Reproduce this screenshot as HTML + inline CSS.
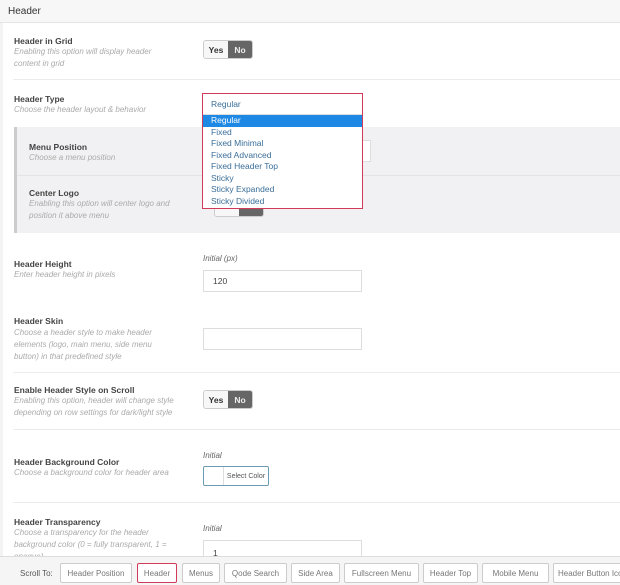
<!DOCTYPE html><html><head><style>
*{margin:0;padding:0;box-sizing:border-box}
body{width:620px;height:585px;overflow:hidden;background:#fff;font-family:"Liberation Sans",sans-serif;position:relative;color:#333}
.a{position:absolute;white-space:nowrap}
.t{font-size:8.5px;font-weight:bold;color:#444}
.d{font-size:8px;font-style:italic;color:#aaa;line-height:12px}
.sep{position:absolute;left:13px;right:0;height:1px;background:#ececec}
.tg{position:absolute;width:50px;height:19px;border:1px solid #ccc;border-radius:3px;overflow:hidden;font-size:8.5px;font-weight:bold;display:flex}
.tg span{flex:1;display:flex;align-items:center;justify-content:center}
.tg .y{background:#f7f7f7;color:#333}.tg .n{background:#666;color:#eee}
.in{position:absolute;border:1px solid #ddd;background:#fff;font-size:8.5px;padding-left:9px;display:flex;align-items:center;color:#444}
.ini{font-size:8px;font-style:italic;color:#666}
.btn{position:absolute;top:563px;height:20px;border:1px solid #ccc;border-radius:2px;background:#fff;font-size:8px;color:#777;display:flex;align-items:center;justify-content:center}
.opt{height:11.5px;line-height:11.5px;padding-left:8px;font-size:8.5px;color:#3a6e99}
</style></head><body>
<div class="a" style="left:0;top:0;width:620px;height:23px;background:#f7f7f7;border-bottom:1px solid #e5e5e5"></div>
<div class="a" style="left:8px;top:6px;font-size:10px;color:#333">Header</div>
<div class="a" style="left:0;top:23px;width:3px;height:534px;background:#f3f3f3"></div>

<div class="a t" style="left:14px;top:36px">Header in Grid</div>
<div class="a d" style="left:14px;top:46px">Enabling this option will display header<br>content in grid</div>
<div class="tg" style="left:203px;top:40px"><span class="y">Yes</span><span class="n">No</span></div>
<div class="sep" style="top:79px"></div>

<div class="a t" style="left:14px;top:94px">Header Type</div>
<div class="a d" style="left:14px;top:104px">Choose the header layout &amp; behavior</div>

<div class="a" style="left:14px;top:127px;width:606px;height:106px;background:#f1f1f3;border-left:3px solid #ccc"></div>
<div class="sep" style="top:175px;left:17px;background:#e4e4e4"></div>
<div class="a t" style="left:29px;top:142px">Menu Position</div>
<div class="a d" style="left:29px;top:152px">Choose a menu position</div>
<div class="in" style="left:330px;top:140px;width:41px;height:22px"></div>
<div class="a t" style="left:29px;top:188px">Center Logo</div>
<div class="a d" style="left:29px;top:198px">Enabling this option will center logo and<br>position it above menu</div>
<div class="tg" style="left:214px;top:198px"><span class="y"></span><span class="n"></span></div>

<div class="a" style="left:202px;top:93px;width:161px;height:116px;border:1.5px solid #d23a5a;background:#fff">
<div style="height:21px;line-height:20px;padding-left:8px;font-size:8.5px;color:#3a6e99;border-bottom:1px solid #ddd">Regular</div>
<div class="opt" style="background:#1e88e5;color:#fff">Regular</div>
<div class="opt">Fixed</div><div class="opt">Fixed Minimal</div><div class="opt">Fixed Advanced</div><div class="opt">Fixed Header Top</div><div class="opt">Sticky</div><div class="opt">Sticky Expanded</div><div class="opt">Sticky Divided</div>
</div>

<div class="a ini" style="left:203px;top:254px">Initial (px)</div>
<div class="a t" style="left:14px;top:259px">Header Height</div>
<div class="a d" style="left:14px;top:269px">Enter header height in pixels</div>
<div class="in" style="left:203px;top:270px;width:159px;height:22px">120</div>

<div class="a t" style="left:14px;top:316px">Header Skin</div>
<div class="a d" style="left:14px;top:327px">Choose a header style to make header<br>elements (logo, main menu, side menu<br>button) in that predefined style</div>
<div class="in" style="left:203px;top:328px;width:159px;height:22px"></div>
<div class="sep" style="top:372px"></div>

<div class="a t" style="left:14px;top:385px">Enable Header Style on Scroll</div>
<div class="a d" style="left:14px;top:395px">Enabling this option, header will change style<br>depending on row settings for dark/light style</div>
<div class="tg" style="left:203px;top:390px"><span class="y">Yes</span><span class="n">No</span></div>
<div class="sep" style="top:429px"></div>

<div class="a ini" style="left:203px;top:451px">Initial</div>
<div class="a t" style="left:14px;top:457px">Header Background Color</div>
<div class="a d" style="left:14px;top:467px">Choose a background color for header area</div>
<div class="a" style="left:203px;top:466px;width:66px;height:20px;border:1px solid #6b9cb5;border-radius:2px;background:#fff;display:flex"><div style="width:20px;border-right:1px solid #ddd"></div><div style="flex:1;font-size:7px;color:#555;display:flex;align-items:center;justify-content:center">Select Color</div></div>
<div class="sep" style="top:502px"></div>

<div class="a t" style="left:14px;top:517px">Header Transparency</div>
<div class="a d" style="left:14px;top:527px">Choose a transparency for the header<br>background color (0 = fully transparent, 1 =<br>opaque)</div>
<div class="a ini" style="left:203px;top:524px">Initial</div>
<div class="in" style="left:203px;top:540px;width:159px;height:22px;align-items:flex-start;padding-top:7px">1</div>

<div class="a" style="left:0;top:556px;width:620px;height:29px;background:#f5f5f5;border-top:1px solid #ddd"></div>
<div class="a" style="left:20px;top:569px;font-size:8px;color:#555">Scroll To:</div>
<div class="btn" style="left:60px;width:72px">Header Position</div>
<div class="btn" style="left:137px;width:40px;border:1.5px solid #d23a5a">Header</div>
<div class="btn" style="left:182px;width:38px">Menus</div>
<div class="btn" style="left:224px;width:63px">Qode Search</div>
<div class="btn" style="left:291px;width:49px">Side Area</div>
<div class="btn" style="left:344px;width:75px">Fullscreen Menu</div>
<div class="btn" style="left:423px;width:55px">Header Top</div>
<div class="btn" style="left:482px;width:67px">Mobile Menu</div>
<div class="btn" style="left:553px;width:80px;justify-content:flex-start;padding-left:4px">Header Button Icon</div>
</body></html>
